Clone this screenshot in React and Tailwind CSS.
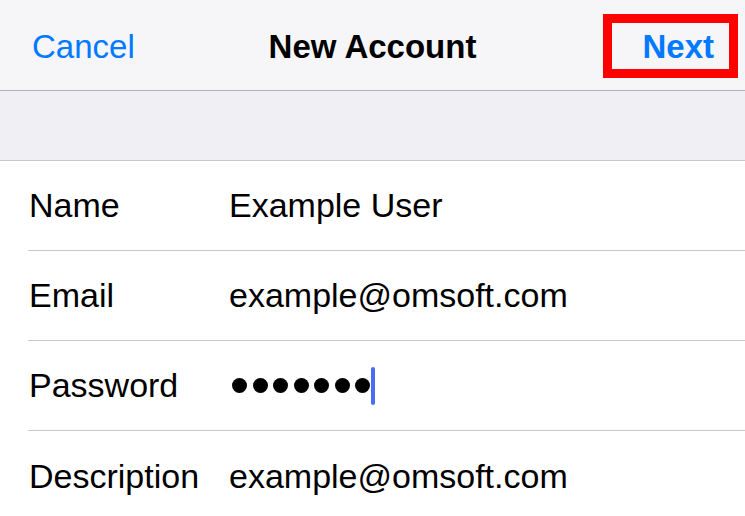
export default function App() {
  const rows = [
    { label: "Name", value: "Example User" },
    { label: "Email", value: "example@omsoft.com" },
    { label: "Password", secret: 7 },
    { label: "Description", value: "example@omsoft.com" },
  ];

  return (
    <div
      className="w-[745px] h-[516px] overflow-hidden bg-white text-black"
      style={{ fontFamily: '"Liberation Sans", Arial, sans-serif' }}
    >
      {/* nav bar */}
      <div className="relative flex h-[91px] items-center justify-between border-b border-[#b2b2b2] bg-[#f6f6f8] pl-[32px] pr-[31px] pt-[3px] text-[33px] leading-none">
        <span className="text-[#007aff]">Cancel</span>
        <span className="absolute left-1/2 -translate-x-1/2 font-bold">
          New Account
        </span>
        <span className="relative font-bold text-[#007aff]">
          Next
          <span className="absolute -left-[39px] -right-[24px] -top-[16px] -bottom-[15px] border-[9px] border-[#ff0000]" />
        </span>
      </div>

      {/* section spacer */}
      <div className="h-[70px] border-b border-[#c8c7cc] bg-[#efeff4]" />

      {/* form rows */}
      <div className="pl-[28px]">
        {rows.map((r, i) => (
          <div
            key={r.label}
            className={`flex h-[90px] items-center text-[34px] ${
              i < rows.length - 1 ? "border-b border-[#c8c7cc]" : ""
            }`}
          >
            <span className="w-[201px] pl-[1px]">{r.label}</span>
            {r.secret ? (
              <div className="flex items-center pl-[3px]">
                <div className="flex gap-[5.5px]">
                  {Array.from({ length: r.secret }).map((_, k) => (
                    <span
                      key={k}
                      className="block h-[15px] w-[15px] rounded-full bg-black"
                    />
                  ))}
                </div>
                <span className="ml-[1px] block h-[38px] w-[4px] rounded-full bg-[#4b6cf5]" />
              </div>
            ) : (
              <span>{r.value}</span>
            )}
          </div>
        ))}
      </div>
    </div>
  );
}
